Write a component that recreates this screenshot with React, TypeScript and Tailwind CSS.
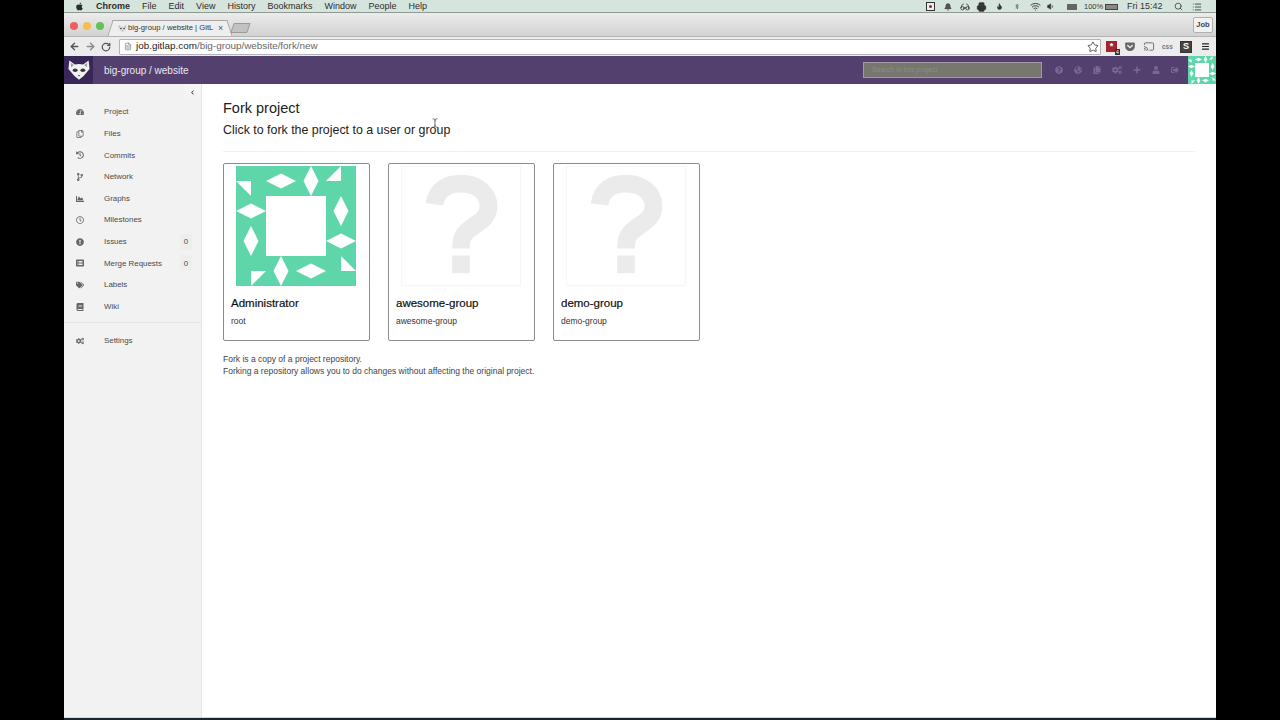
import { ArrowLeft, ArrowRight, RotateCw, Star, FileText, Menu, Search, Wifi, Bluetooth, Volume1, Bell, Glasses, List, Flame, Printer, Cast, TextCursor } from "lucide-react";
import { FaApple, FaTachometerAlt, FaRegCopy, FaHistory, FaCodeBranch, FaChartArea, FaRegClock, FaExclamationCircle, FaListAlt, FaTags, FaBook, FaCogs, FaChevronLeft, FaQuestionCircle, FaGlobeAmericas, FaCopy, FaPlus, FaUser, FaSignOutAlt, FaGetPocket } from "react-icons/fa";

const navItems = [
  { label: "Project", icon: FaTachometerAlt },
  { label: "Files", icon: FaRegCopy },
  { label: "Commits", icon: FaHistory },
  { label: "Network", icon: FaCodeBranch },
  { label: "Graphs", icon: FaChartArea },
  { label: "Milestones", icon: FaRegClock },
  { label: "Issues", icon: FaExclamationCircle, badge: "0" },
  { label: "Merge Requests", icon: FaListAlt, badge: "0" },
  { label: "Labels", icon: FaTags },
  { label: "Wiki", icon: FaBook },
];

const menuItems = ["File", "Edit", "View", "History", "Bookmarks", "Window", "People", "Help"];

function Identicon({ className }: { className: string }) {
  return (
    <svg viewBox="0 0 120 120" className={className}>
      <rect width="120" height="120" fill="#5fd6a9" />
      <g fill="#fff">
        <rect x="30" y="30" width="60" height="60" />
        <polygon points="30,15 45,7.5 60,15 45,22.5" />
        <polygon points="67.5,15 75,0 82.5,15 75,30" />
        <polygon points="105,0 105,15 90,15" />
        <polygon points="0,15 15,15 15,30" />
        <polygon points="0,45 15,37.5 30,45 15,52.5" />
        <polygon points="7.5,75 15,60 22.5,75 15,90" />
        <polygon points="97.5,45 105,30 112.5,45 105,60" />
        <polygon points="90,75 105,67.5 120,75 105,82.5" />
        <polygon points="105,90 120,105 105,105" />
        <polygon points="37.5,105 45,90 52.5,105 45,120" />
        <polygon points="60,105 75,97.5 90,105 75,112.5" />
        <polygon points="15,105 30,105 15,120" />
      </g>
    </svg>
  );
}

function FoxLogo({ className, face, eye }: { className: string; face: string; eye: string }) {
  return (
    <svg viewBox="0 0 24 24" className={className}>
      <path fill={face} d="M1.500 1.500 L7.500 6 Q12 4.800 16.500 6 L22.500 1.500 L23.500 11 L17 18.500 L12 22.500 L7 18.500 L0.500 11 Z" />
      <path fill={eye} opacity="0.45" d="M3 4 L6.500 6.800 L3.300 9 Z M21 4 L17.500 6.800 L20.700 9 Z" />
      <ellipse cx="7.800" cy="12.200" rx="2.700" ry="1.900" fill={eye} />
      <ellipse cx="16.200" cy="12.200" rx="2.700" ry="1.900" fill={eye} />
      <path fill={eye} d="M10.800 17.500 H13.200 L12 19 Z" />
    </svg>
  );
}

function GroupCard({ name, path, children }: { name: string; path: string; children: React.ReactNode }) {
  return (
    <div className="flex h-[178px] w-[147px] flex-col rounded-[2px] border border-[#8c8c8c] bg-white pt-[2px]">
      <div className="px-[12px]">{children}</div>
      <div className="mt-[11px] pl-[7px] text-[11.500px] leading-[13px] text-[#111] [-webkit-text-stroke:0.2px_#111]">{name}</div>
      <div className="mt-[5px] pl-[7px] text-[8.500px] leading-[12px] text-[#333]">{path}</div>
    </div>
  );
}

// default "no avatar" picture
function Placeholder() {
  return (
    <svg viewBox="0 0 120 120" className="h-[120px] w-[120px] border border-[#f6f6f6]">
      <path d="M33 38 C35 23 46 17 60 17 C76 17 88 26 88 40 C88 52 78 56 69 63 C62 68 60 73 60 83" fill="none" stroke="#ebebeb" strokeWidth="18" />
      <rect x="51" y="90" width="18" height="18" fill="#ebebeb" />
    </svg>
  );
}

export default function App() {
  return (
    <div className="flex h-[720px] w-[1280px] overflow-hidden bg-black font-['Liberation_Sans',sans-serif]">
      <div className="ml-[64px] flex w-[1152px] flex-col bg-white">
        {/* mac menu bar */}
        <div className="flex h-[13px] shrink-0 items-center border-b border-[#8f9a95] bg-[#d6e4de] pt-[1px] text-[9px] text-[#2c2c2c]">
          <FaApple className="ml-[11px] h-[9px] w-[9px]" />
          <span className="ml-[12px] font-bold">Chrome</span>
          <div className="ml-[12px] flex gap-[12px]">
            {menuItems.map((m) => (
              <span key={m}>{m}</span>
            ))}
          </div>
          <div className="ml-auto flex items-center pr-[13px] text-[#333]">
            <span className="flex h-[9px] w-[9px] items-center justify-center border border-[#333] bg-[#eee]">
              <span className="h-[3px] w-[3px] rounded-full bg-[#a5222f]" />
            </span>
            <Bell className="ml-[9px] h-[8px] w-[8px]" fill="#555" />
            <Glasses className="ml-[7px] h-[10px] w-[12px]" />
            <Printer className="ml-[5px] h-[10px] w-[11px]" fill="#333" />
            <Flame className="ml-[9px] h-[9px] w-[7px]" fill="#333" />
            <Bluetooth className="ml-[11px] h-[9px] w-[6px]" />
            <Wifi className="ml-[9px] h-[11px] w-[13px]" />
            <Volume1 className="ml-[5px] h-[9px] w-[8px]" fill="#333" />
            <span className="ml-[12px] h-[6px] w-[10px] bg-[#666]" />
            <span className="ml-[7px] w-[19px] whitespace-nowrap text-[7.500px]">100%</span>
            <span className="ml-[2px] h-[6px] w-[13px] border border-[#444] bg-[#888]" />
            <span className="ml-[9px] w-[36px] whitespace-nowrap text-[9px]">Fri 15:42</span>
            <Search className="ml-[11px] h-[9px] w-[9px]" />
            <List className="ml-[8px] h-[10px] w-[12px]" />
          </div>
        </div>

        {/* tab strip */}
        <div className="flex h-[23px] shrink-0 items-end bg-gradient-to-b from-[#ececec] to-[#d2d2d2]">
          <div className="mb-[6px] ml-[6px] flex gap-[5px] self-end">
            <span className="h-[8px] w-[8px] rounded-full bg-[#ee5f5b]" />
            <span className="h-[8px] w-[8px] rounded-full bg-[#f6bd4f]" />
            <span className="h-[8px] w-[8px] rounded-full bg-[#60c454]" />
          </div>
          <div className="relative ml-[9px] flex h-[16px] w-[114px] items-center bg-[#eeeeee] pl-[5px]">
            <span className="absolute -left-[3px] top-0 h-full w-[8px] -skew-x-[18deg] border-l border-t border-[#a8a8a8] bg-[#eeeeee]" />
            <span className="absolute -right-[3px] top-0 h-full w-[8px] skew-x-[18deg] border-r border-t border-[#a8a8a8] bg-[#eeeeee]" />
            <span className="absolute inset-x-[4px] top-0 border-t border-[#a8a8a8]" />
            <FoxLogo className="relative h-[9px] w-[9px]" face="#dcdcdc" eye="#555" />
            <span className="relative ml-[1px] w-[86px] whitespace-nowrap text-[7.700px] text-[#333]">big-group / website | GitL</span>
            <span className="relative ml-[4px] text-[9px] leading-none text-[#555]">×</span>
          </div>
          <span className="mb-[3px] ml-[5px] h-[10px] w-[17px] -skew-x-[20deg] rounded-[1px] border border-[#9a9a9a] bg-[#c2c2c2]" />
          <div className="mb-[3px] ml-auto mr-[3px] flex h-[16px] w-[20px] items-center justify-center rounded-[2px] border border-[#b0b0b0] bg-[#f2f2f2] text-[7.500px] font-bold text-[#444]">Job</div>
        </div>

        {/* toolbar */}
        <div className="flex h-[20px] shrink-0 items-center border-t border-[#b5b5b5] bg-[#ececec]">
          <ArrowLeft className="ml-[5px] h-[11px] w-[11px] text-[#555]" strokeWidth={3} />
          <ArrowRight className="ml-[5px] h-[11px] w-[11px] text-[#8a8a8a]" strokeWidth={3} />
          <RotateCw className="ml-[5px] h-[10px] w-[10px] text-[#555]" strokeWidth={3} />
          <div className="ml-[8px] flex h-[16px] w-[982px] items-center rounded-[1px] border border-[#b4b4b4] bg-white pl-[4px] text-[9.900px] text-[#666]">
            <FileText className="h-[9px] w-[8px] text-[#777]" />
            <span className="ml-[4px]">
              <span className="text-[#222]">job.gitlap.com</span>/big-group/website/fork/new
            </span>
            <Star className="ml-auto mr-[1px] h-[12px] w-[12px] text-[#555]" />
          </div>
          {/* extensions */}
          <div className="flex flex-1 items-center pl-[5px]">
            <span className="relative flex h-[11px] w-[11px] items-center justify-center bg-[#a5222f] text-[9px] font-bold leading-none text-white">
              *
              <span className="absolute -bottom-[3px] -right-[3px] flex h-[6px] w-[5px] items-center justify-center bg-[#333] text-[5px] font-normal">4</span>
            </span>
            <FaGetPocket className="ml-[7px] h-[11px] w-[12px] text-[#666]" />
            <Cast className="ml-[7px] h-[11px] w-[12px] text-[#666]" />
            <span className="ml-[7px] w-[11px] text-[6.500px] font-bold text-[#777]">css</span>
            <span className="ml-[7px] flex h-[12px] w-[12px] items-center justify-center border border-[#333] bg-[#444] text-[9px] font-bold leading-none text-white">S</span>
            <Menu className="ml-[9px] h-[11px] w-[9px] text-[#222]" strokeWidth={3} />
          </div>
        </div>

        {/* gitlab header */}
        <div className="flex h-[28px] shrink-0 items-center bg-[#54406f]">
          <div className="flex h-full w-[29px] items-center justify-center bg-[#39275a]">
            <FoxLogo className="h-[22px] w-[22px]" face="#f2f2f2" eye="#3a3a3a" />
          </div>
          <span className="ml-[11px] text-[10px] text-[#ebe7f0]">big-group / website</span>
          <div className="ml-auto flex h-[16px] w-[179px] items-center border border-[#a09aa8] bg-[#77776f] pl-[8px] text-[7px] text-[#8c8c84]">
            Search in this project
          </div>
          <div className="ml-[13px] flex items-center gap-[11px] text-[#7b6896]">
            <FaQuestionCircle className="h-[8px] w-[8px]" />
            <FaGlobeAmericas className="h-[8px] w-[8px]" />
            <FaCopy className="h-[8px] w-[8px]" />
            <FaCogs className="h-[8px] w-[10px]" />
            <FaPlus className="h-[8px] w-[8px]" />
            <FaUser className="h-[8px] w-[8px]" />
            <FaSignOutAlt className="h-[8px] w-[8px]" />
          </div>
          <Identicon className="ml-[9px] h-[28px] w-[28px]" />
        </div>

        {/* page body */}
        <div className="relative flex min-h-0 flex-1">
          <aside className="flex w-[138px] shrink-0 flex-col border-r border-[#e6e6e6] bg-[#f2f2f2]">
            <div className="ml-auto flex h-[16px] w-[17px] items-center justify-center bg-[#f4f4f4] text-[#444]">
              <FaChevronLeft className="h-[5px] w-[5px]" />
            </div>
            <nav className="mt-[1.500px] flex flex-col">
              {navItems.map(({ label, icon: Icon, badge }) => (
                <div key={label} className="flex h-[21.600px] items-center text-[7.900px] text-[#4a4a4a]">
                  <Icon className="ml-[12px] h-[8px] w-[8px] text-[#666]" />
                  <span className="ml-[20px]">{label}</span>
                  {badge && <span className="ml-auto mr-[9px] flex h-[16px] w-[12px] items-center justify-center bg-[#eeeeee]">{badge}</span>}
                </div>
              ))}
            </nav>
            <div className="mt-[5px] border-t border-[#e4e4e4]" />
            <div className="mt-[7px] flex h-[21.600px] items-center text-[7.900px] text-[#4a4a4a]">
              <FaCogs className="ml-[12px] h-[8px] w-[8px] text-[#666]" />
              <span className="ml-[20px]">Settings</span>
            </div>
          </aside>

          <main className="flex-1 pl-[21px] pr-[21px] pt-[14px]">
            <h3 className="text-[14.500px] leading-[20px] text-[#222]">Fork project</h3>
            <p className="mt-[2px] text-[12.400px] leading-[20px] text-[#222]">Click to fork the project to a user or group</p>
            <div className="mt-[11px] border-t border-[#f0f0f0]" />
            <div className="mt-[11px] flex gap-[18px]">
              <GroupCard name="Administrator" path="root">
                <Identicon className="h-[120px] w-[120px]" />
              </GroupCard>
              <GroupCard name="awesome-group" path="awesome-group">
                <Placeholder />
              </GroupCard>
              <GroupCard name="demo-group" path="demo-group">
                <Placeholder />
              </GroupCard>
            </div>
            <p className="mt-[12px] text-[8.520px] leading-[12px] text-[#444]">
              Fork is a copy of a project repository.
              <br />
              Forking a repository allows you to do changes without affecting the original project.
            </p>
          </main>

          {/* text cursor */}
          <TextCursor className="absolute left-[366px] top-[34px] h-[10px] w-[10px] text-[#555]" />
        </div>

        <div className="h-[3px] shrink-0 border-t border-[#cfd6dc] bg-[#1a2530]" />
      </div>
    </div>
  );
}
